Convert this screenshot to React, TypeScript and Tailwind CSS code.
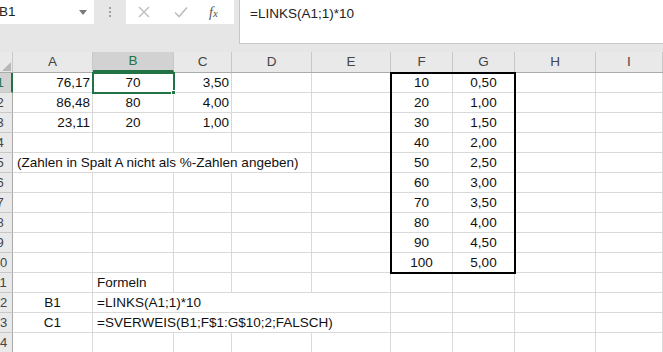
import React from "react";

const font = { fontFamily: '"Liberation Sans", Arial, sans-serif' };

// column widths incl. right gridline (A..H), I takes the rest
const cols = [
  { key: "A", w: "w-[80px]" },
  { key: "B", w: "w-[81px]" },
  { key: "C", w: "w-[58px]" },
  { key: "D", w: "w-[80px]" },
  { key: "E", w: "w-[79px]" },
  { key: "F", w: "w-[62px]" },
  { key: "G", w: "w-[62px]" },
  { key: "H", w: "w-[81px]" },
  { key: "I", w: "flex-1" },
];

type Cell = { text?: string; align?: "l" | "c" | "r"; span?: number };

const table: Record<number, Record<string, Cell>> = {
  1: { A: { text: "76,17", align: "r" }, B: { text: "70", align: "c" }, C: { text: "3,50", align: "r" } },
  2: { A: { text: "86,48", align: "r" }, B: { text: "80", align: "c" }, C: { text: "4,00", align: "r" } },
  3: { A: { text: "23,11", align: "r" }, B: { text: "20", align: "c" }, C: { text: "1,00", align: "r" } },
  5: { A: { text: "(Zahlen in Spalt A nicht als %-Zahlen angeben)", align: "l", span: 4 } },
  11: { B: { text: "Formeln", align: "l" } },
  12: { A: { text: "B1", align: "c" }, B: { text: "=LINKS(A1;1)*10", align: "l", span: 4 } },
  13: { A: { text: "C1", align: "c" }, B: { text: "=SVERWEIS(B1;F$1:G$10;2;FALSCH)", align: "l", span: 4 } },
};

const fg = [10, 20, 30, 40, 50, 60, 70, 80, 90, 100];
const gv = ["0,50", "1,00", "1,50", "2,00", "2,50", "3,00", "3,50", "4,00", "4,50", "5,00"];
fg.forEach((v, i) => {
  const r = i + 1;
  table[r] = { ...(table[r] || {}), F: { text: String(v), align: "c" }, G: { text: gv[i], align: "c" } };
});

const spanWidth: Record<string, string> = {
  A: "w-[299px]",
  B: "w-[298px]",
};

function Row({ n }: { n: number }) {
  const data = table[n] || {};
  const out: React.ReactNode[] = [];
  for (let i = 0; i < cols.length; i++) {
    const c = cols[i];
    const cell = data[c.key];
    const span = cell?.span ?? 1;
    const width = span > 1 ? spanWidth[c.key] : c.w;
    const align =
      cell?.align === "r" ? "justify-end pr-[2px]" : cell?.align === "c" ? "justify-center" : "justify-start pl-[4px]";
    out.push(
      <div
        key={c.key}
        className={`${width} shrink-0 h-full border-r border-b border-[#d9d9d9] flex items-center pt-[1px] whitespace-nowrap overflow-hidden ${align}`}
      >
        {cell?.text}
      </div>
    );
    i += span - 1;
  }
  return (
    <div className="flex h-[20px]">
      <div
        className={`w-[13px] shrink-0 h-full overflow-hidden border-b border-[#c8c8c8] ${
          n === 1 ? "bg-[#d2d2d2] border-r-2 border-r-[#217346]" : "bg-[#e9e9e9] border-r border-r-[#ababab]"
        }`}
      >
        <div className={`w-[26px] -ml-[13px] h-full flex items-center justify-center text-[13px] ${n === 1 ? "text-[#217346]" : "text-[#444]"}`}>
          {n}
        </div>
      </div>
      {out}
    </div>
  );
}

export default function App() {
  return (
    <div className="w-[663px] h-[352px] overflow-hidden bg-[#e6e6e6] text-[13.5px] text-[#111]" style={font}>
      {/* formula bar */}
      <div className="flex h-[44px] items-start">
        <div className="w-[94px] h-[24px] bg-white flex items-center justify-between pr-[7px] shrink-0">
          <span className="text-[13.5px] text-[#222] -ml-[1px]">B1</span>
          <svg width="8" height="5" viewBox="0 0 8 5">
            <path d="M0 0 L8 0 L4 5 Z" fill="#7a7a7a" />
          </svg>
        </div>
        <div className="w-[32px] h-[24px] flex flex-col items-center justify-center gap-[2px] shrink-0">
          <span className="w-[2px] h-[2px] bg-[#a0a0a0]" />
          <span className="w-[2px] h-[2px] bg-[#a0a0a0]" />
          <span className="w-[2px] h-[2px] bg-[#a0a0a0]" />
        </div>
        <div className="w-[108px] h-[24px] bg-white flex items-center shrink-0">
          <svg width="12" height="12" viewBox="0 0 12 12" className="ml-[12px]">
            <path d="M1 1 L11 11 M11 1 L1 11" stroke="#bdbdbd" strokeWidth="1.4" />
          </svg>
          <svg width="14" height="12" viewBox="0 0 14 12" className="ml-[24px]">
            <path d="M1 6.5 L5 10.5 L13 1.5" stroke="#bdbdbd" strokeWidth="1.6" fill="none" />
          </svg>
          <span
            className="ml-[21px] text-[14px] italic text-[#555]"
            style={{ fontFamily: '"Liberation Serif", "Times New Roman", serif' }}
          >
            f<span className="text-[11px]">x</span>
          </span>
        </div>
        <div className="ml-[5px] flex-1 h-[44px] bg-white border-l border-b border-[#c6c6c6] pl-[10px] pt-[4px] text-[13.5px] text-[#222]">
          =LINKS(A1;1)*10
        </div>
      </div>

      {/* grid */}
      <div className="mt-[8px] relative">
        {/* column headers */}
        <div className="flex h-[21px] bg-[#e9e9e9] border-b border-[#ababab] text-[#444]">
          <div className="w-[13px] shrink-0 h-full border-r border-[#c8c8c8] relative">
            <svg width="13" height="21" viewBox="0 0 13 21" className="absolute inset-0">
              <path d="M2 19 L11 19 L11 10 Z" fill="#b8b8b8" />
            </svg>
          </div>
          {cols.map((c) => (
            <div
              key={c.key}
              className={`${c.w} shrink-0 h-full flex items-center justify-center border-r border-[#c8c8c8] ${
                c.key === "B" ? "bg-[#d2d2d2] border-b-2 border-b-[#217346] text-[#217346]" : ""
              }`}
            >
              {c.key}
            </div>
          ))}
        </div>
        <div className="bg-white">
          {Array.from({ length: 14 }, (_, i) => (
            <Row key={i} n={i + 1} />
          ))}
        </div>

        {/* selection B1 */}
        <div className="absolute left-[92px] top-[20px] w-[83px] h-[22px] border-2 border-[#217346] pointer-events-none" />
        <div className="absolute left-[171px] top-[38px] w-[5px] h-[5px] bg-[#217346] border border-white" />

        {/* thick border F1:G10 */}
        <div className="absolute left-[390px] top-[20px] w-[126px] h-[202px] border-2 border-black pointer-events-none" />
      </div>
    </div>
  );
}
